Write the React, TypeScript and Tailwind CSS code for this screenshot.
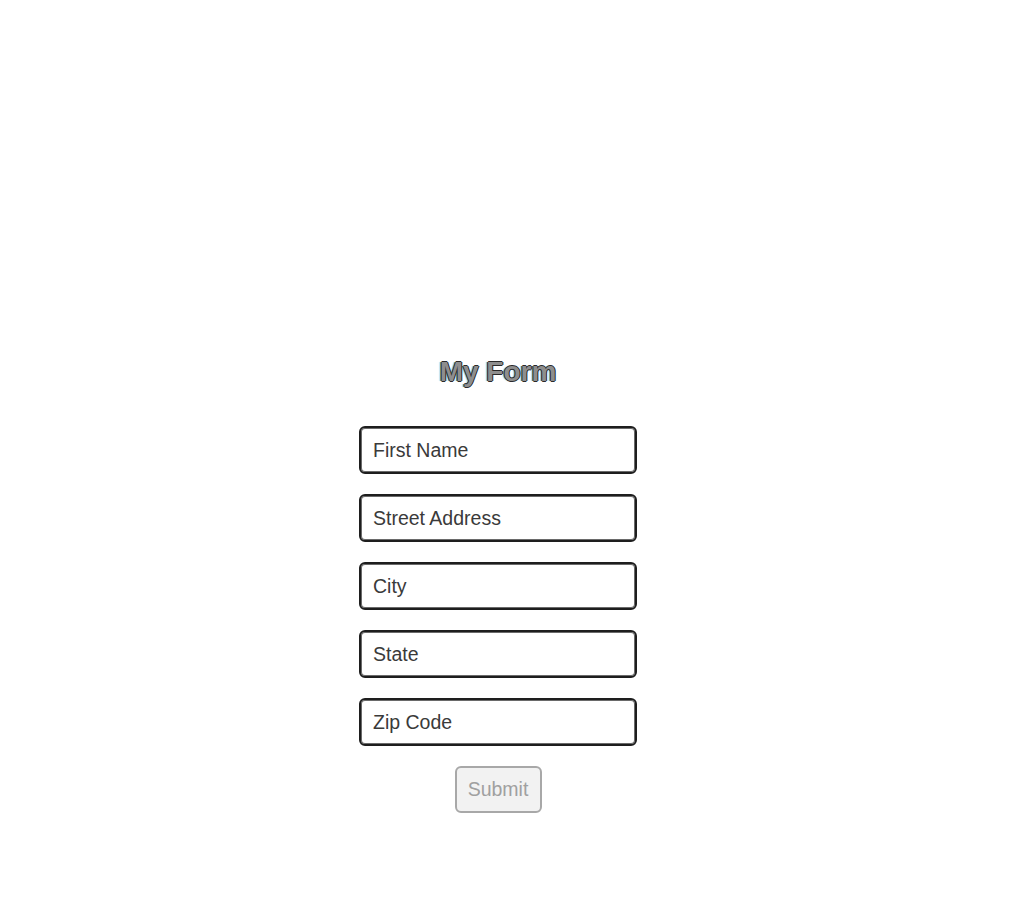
const fields = ["First Name", "Street Address", "City", "State", "Zip Code"];

export default function App() {
  return (
    <div className="min-h-[899px] w-full bg-white font-['Liberation_Sans',Arial,sans-serif]">
      <div className="ml-[359px] flex w-[278px] flex-col items-center pt-[354px]">
        <h1 className="text-[28px] font-bold leading-[36px] text-[#8e8e8e] [text-shadow:-1px_0_0_#2a2a2a,1px_0_0_#2a2a2a,0_-1px_0_#2a2a2a,0_1px_0_#2a2a2a,-2px_0_1px_#8cc4e8]">
          My Form
        </h1>
        <form className="mt-[36px] flex w-full flex-col items-center gap-[20px]">
          {fields.map((f) => (
            <input
              key={f}
              type="text"
              placeholder={f}
              className="h-[48px] w-[278px] rounded-[6px] border-2 border-[#1e1e1e] bg-white px-[12px] text-[19.5px] text-[#333] shadow-[inset_0_0_0_1px_#6a6a6a] outline-none placeholder:text-[#3a3a3a]"
            />
          ))}
          <button
            type="submit"
            disabled
            className="h-[47px] w-[87px] rounded-[6px] border-2 border-[#a8a8a8] bg-[#f2f2f2] text-[19.5px] text-[#a0a0a0]"
          >
            Submit
          </button>
        </form>
      </div>
    </div>
  );
}
